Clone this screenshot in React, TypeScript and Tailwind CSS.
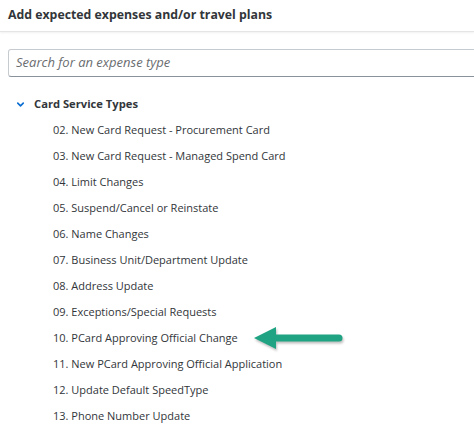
import { ChevronDown } from "lucide-react";

const items = [
  "02. New Card Request - Procurement Card",
  "03. New Card Request - Managed Spend Card",
  "04. Limit Changes",
  "05. Suspend/Cancel or Reinstate",
  "06. Name Changes",
  "07. Business Unit/Department Update",
  "08. Address Update",
  "09. Exceptions/Special Requests",
  "10. PCard Approving Official Change",
  "11. New PCard Approving Official Application",
  "12. Update Default SpeedType",
  "13. Phone Number Update",
];

function GreenArrow() {
  return (
    <svg width="100" height="30" viewBox="0 0 100 30" className="ml-[15px] drop-shadow-[1px_2px_1px_rgba(0,0,0,0.25)]">
      <path d="M1 15 L23 4 L23 11.5 L86 11.5 Q89.5 11.5 89.5 15 Q89.5 18.5 86 18.5 L23 18.5 L23 26 Z" fill="#1fa383" />
    </svg>
  );
}

export default function App() {
  return (
    <div className="h-[445px] w-[474px] overflow-hidden bg-white font-['Open_Sans',sans-serif] text-[#32363a]">
      <header className="h-[32px] border-b border-[#e5e5e5] pl-2 pt-[6px] shadow-[0_1px_2px_rgba(0,0,0,0.06)]">
        <h1 className="text-[12.3px] font-bold leading-[18px] text-[#32363a]">Add expected expenses and/or travel plans</h1>
      </header>

      <div className="mt-[17px] pl-2">
        <div className="flex h-[28px] w-[480px] items-center rounded-l-[3px] border border-[#c6cbd0] border-b-[#89919a] bg-white pl-[7px]">
          <input
            type="text"
            placeholder="Search for an expense type"
            className="w-full bg-transparent text-[13px] italic text-[#32363a] outline-none placeholder:text-[#6a6d70]"
          />
        </div>
      </div>

      <div className="mt-[18px]">
        <div className="flex h-[18px] items-center pl-[15px]">
          <ChevronDown className="h-[11px] w-[11px] text-[#0a6ed1]" strokeWidth={3.5} />
          <span className="ml-[8px] text-[11.2px] font-bold text-[#32363a]">Card Service Types</span>
        </div>
        <ul className="mt-[4px]">
          {items.map((item) => (
            <li key={item} className="flex h-[26px] items-center pl-[53px] text-[11px] text-[#32363a]">
              <span>{item}</span>
              {item.startsWith("10.") ? <GreenArrow /> : null}
            </li>
          ))}
        </ul>
      </div>
    </div>
  );
}
